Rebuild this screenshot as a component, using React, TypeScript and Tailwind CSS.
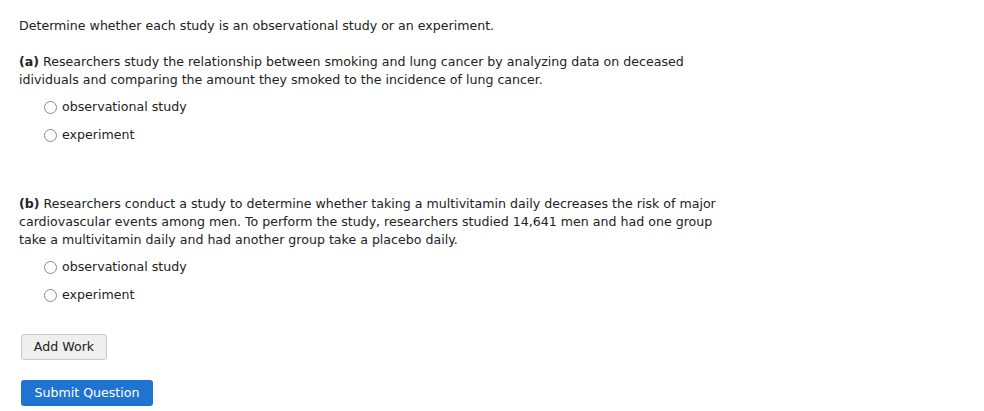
export default function App() {
  const parts = [
    {
      label: "(a)",
      text: (
        <>
          Researchers study the relationship between smoking and lung cancer by analyzing data on deceased
          <br />
          idividuals and comparing the amount they smoked to the incidence of lung cancer.
        </>
      ),
      name: "a",
    },
    {
      label: "(b)",
      text: (
        <>
          Researchers conduct a study to determine whether taking a multivitamin daily decreases the risk of major
          <br />
          cardiovascular events among men. To perform the study, researchers studied 14,641 men and had one group
          <br />
          take a multivitamin daily and had another group take a placebo daily.
        </>
      ),
      name: "b",
    },
  ];

  return (
    <div className="bg-white min-h-screen px-[19px] pt-[17px] text-[12.6px] leading-[18px] text-[#222]" style={{ fontFamily: "Tahoma, 'DejaVu Sans', sans-serif" }}>
      <p>Determine whether each study is an observational study or an experiment.</p>

      {parts.map((part, i) => (
        <div key={part.name} className={i === 0 ? "mt-[18px]" : "mt-[46px]"}>
          <p>
            <span className="font-bold">{part.label}</span> {part.text}
          </p>
          <div className="mt-[4px] pl-[25px] flex flex-col">
            {["observational study", "experiment"].map((opt) => (
              <label key={opt} className="flex items-center h-[28px] gap-[5px]">
                <span className="w-[13px] h-[13px] rounded-full border border-[#8a8a8a] bg-white inline-block" />
                {opt}
              </label>
            ))}
          </div>
        </div>
      ))}

      <div className="mt-[25px]">
        <button className="h-[26px] w-[86px] ml-[2px] rounded-[3px] border border-[#c8c8c8] bg-[#efefef] text-[#222]">
          Add Work
        </button>
      </div>
      <div className="mt-[20px]">
        <button className="h-[26px] w-[132px] ml-[2px] rounded-[3px] bg-[#1f73d1] text-white">
          Submit Question
        </button>
      </div>
    </div>
  );
}
